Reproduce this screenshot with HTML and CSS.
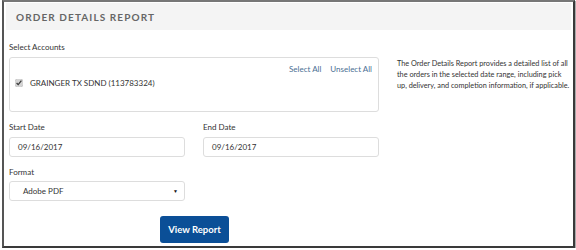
FILE: index.html
```html
<!DOCTYPE html>
<html lang="en">
<head>
    <meta charset="UTF-8">
    <title>Order Details Report</title>
    <link rel="stylesheet" href="styles.css">
</head>
<body>
    <div class="frame">
        <header class="report-header">
            <h1>Order Details Report</h1>
        </header>
        <div class="content">
            <div class="top-row">
                <div class="accounts">
                    <div class="label">Select Accounts</div>
                    <div class="account-box">
                        <div class="account-links">
                            <span class="link">Select All</span>
                            <span class="link">Unselect All</span>
                        </div>
                        <label class="account">
                            <input type="checkbox" checked>
                            <span>GRAINGER TX SDND (113783324)</span>
                        </label>
                    </div>
                </div>
                <p class="desc">The Order Details Report provides a detailed list of all the orders in the selected date range, including pick up, delivery, and completion information, if applicable.</p>
            </div>

            <div class="date-row">
                <div class="field">
                    <div class="label">Start Date</div>
                    <div class="input">09/16/2017</div>
                </div>
                <div class="field">
                    <div class="label">End Date</div>
                    <div class="input">09/16/2017</div>
                </div>
            </div>

            <div class="field format">
                <div class="label">Format</div>
                <div class="input select">
                    <span>Adobe PDF</span>
                    <span class="arrow">&#9660;</span>
                </div>
            </div>

            <div class="actions">
                <button class="btn">View Report</button>
            </div>
        </div>
    </div>
</body>
</html>
```

FILE: styles.css
```css
body {
    margin: 0;
    font-family: Lato, "Open Sans", sans-serif;
    color: #333;
    background: #fff;
}
.frame {
    box-sizing: border-box;
    width: 573px;
    height: 248px;
    margin-left: 2px;
    border: 2px solid #3a3a3a;
    border-top-color: #777;
    border-left-color: #555;
    box-shadow: 1px 1px 0 #aaa;
    padding: 1px 2px 0 2px;
}
.report-header {
    background-color: #f4f4f4;
    height: 27px;
    display: flex;
    align-items: center;
    padding-left: 10px;
}
.report-header h1 {
    margin: 0;
    font-size: 10px;
    font-weight: bold;
    letter-spacing: 1.1px;
    text-transform: uppercase;
    color: #666;
}
.content {
    padding: 0 0 0 3px;
}
.label {
    font-size: 8px;
    line-height: 10px;
    color: #333;
}
.top-row {
    display: flex;
    margin-top: 12px;
}
.accounts {
    width: 370px;
    flex-shrink: 0;
}
.account-box {
    box-sizing: border-box;
    margin-top: 5px;
    height: 55px;
    border: 1px solid #ddd;
    border-radius: 3px;
    padding: 6px 6px 0 5px;
}
.account-links {
    display: flex;
    justify-content: flex-end;
    gap: 9px;
    font-size: 8px;
    line-height: 10px;
}
.link {
    color: #4b6f93;
    cursor: pointer;
}
.account {
    display: flex;
    align-items: center;
    margin-top: 4px;
    font-size: 8px;
    color: #333;
}
.account input {
    width: 8px;
    height: 8px;
    margin: 0 7px 0 0;
    accent-color: #d4d4d4;
}
.desc {
    margin: 16px 0 0 18px;
    width: 174px;
    font-size: 7.3px;
    line-height: 11px;
    color: #333;
}
.date-row {
    display: flex;
    gap: 18px;
    margin-top: 10px;
}
.field {
    width: 176px;
}
.input {
    box-sizing: border-box;
    margin-top: 5px;
    height: 20px;
    border: 1px solid #ddd;
    border-radius: 3px;
    padding: 0 8px;
    display: flex;
    align-items: center;
    font-size: 8px;
    color: #333;
}
.format {
    margin-top: 10px;
}
.format .input {
    margin-top: 4px;
}
.select {
    justify-content: space-between;
    padding: 0 6px 0 13px;
}
.arrow {
    font-size: 5px;
    color: #111;
}
.actions {
    padding-left: 151px;
    margin-top: 15px;
}
.btn {
    width: 69px;
    height: 27px;
    border: none;
    border-radius: 3px;
    background-color: #0b4f97;
    color: #fff;
    font-family: Lato, "Open Sans", sans-serif;
    font-size: 9.5px;
    font-weight: bold;
    cursor: pointer;
}
```
